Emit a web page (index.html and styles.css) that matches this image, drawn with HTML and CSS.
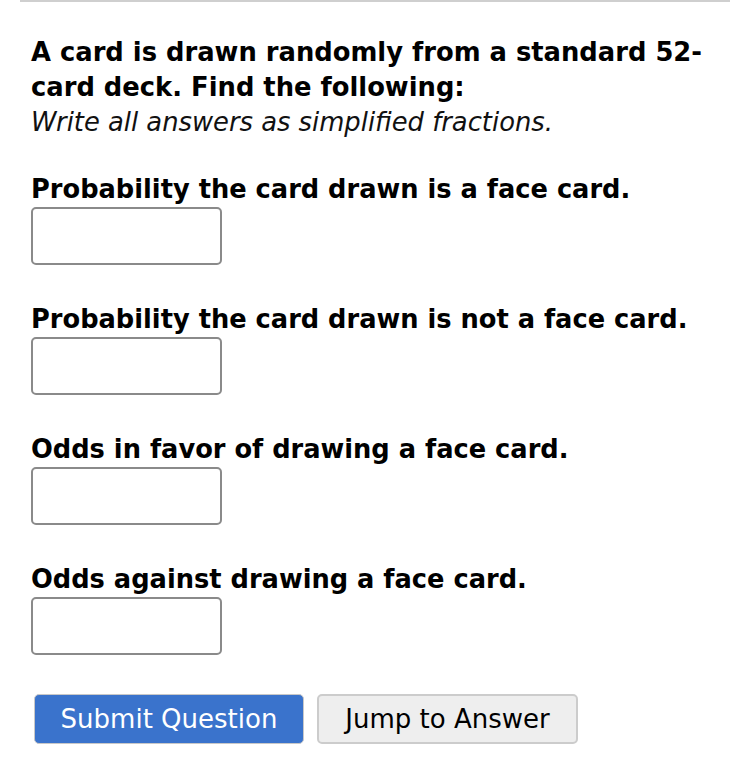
FILE: index.html
```html
<!DOCTYPE html>
<html>
<head>
<meta charset="utf-8">
<link rel="stylesheet" href="styles.css">
</head>
<body>
<div class="page">
  <div class="question">
    <p class="intro"><strong>A card is drawn randomly from a standard 52-card deck. Find the following:</strong><br><em>Write all answers as simplified fractions.</em></p>
    <div class="part">
      <div class="label">Probability the card drawn is a face card.</div>
      <input class="answer" type="text">
    </div>
    <div class="part">
      <div class="label">Probability the card drawn is not a face card.</div>
      <input class="answer" type="text">
    </div>
    <div class="part">
      <div class="label">Odds in favor of drawing a face card.</div>
      <input class="answer" type="text">
    </div>
    <div class="part">
      <div class="label">Odds against drawing a face card.</div>
      <input class="answer" type="text">
    </div>
  </div>
  <div class="buttons">
    <button class="btn primary">Submit Question</button>
    <button class="btn secondary">Jump to Answer</button>
  </div>
</div>
</body>
</html>
```
FILE: styles.css
```css
html, body {
  margin: 0;
  padding: 0;
  background: #fff;
}
body {
  font-family: "DejaVu Sans", Verdana, sans-serif;
  color: #000;
}
.page {
  margin: 0 20px;
  border-top: 2px solid #cfcfcf;
  padding: 0 11px;
}
.intro {
  margin: 33px 0 0 0;
  font-size: 25.8px;
  line-height: 35px;
}
.intro em {
  font-size: 25.8px;
  color: #111;
}
.part {
  margin-top: 39px;
}
.intro + .part {
  margin-top: 34px;
}
.label {
  font-weight: bold;
  font-size: 25.7px;
  line-height: 30px;
}
.answer {
  display: block;
  box-sizing: border-box;
  width: 191px;
  height: 58px;
  margin-top: 3px;
  border: 2px solid #8a8a8a;
  border-radius: 5px;
  background: #fff;
  font-size: 22px;
  padding: 0 8px;
}
.buttons {
  display: flex;
  gap: 13px;
  margin-top: 39px;
  padding-left: 3px;
}
.btn {
  box-sizing: border-box;
  height: 50px;
  border-radius: 5px;
  font-family: "DejaVu Sans", Verdana, sans-serif;
  font-size: 26px;
  padding: 0;
}
.primary {
  background: #3a73cc;
  color: #fff;
  border: 1px solid #c8c8c8;
  width: 270px;
}
.secondary {
  background: #eeeeee;
  color: #000;
  border: 2px solid #cccccc;
  width: 261px;
}
```
